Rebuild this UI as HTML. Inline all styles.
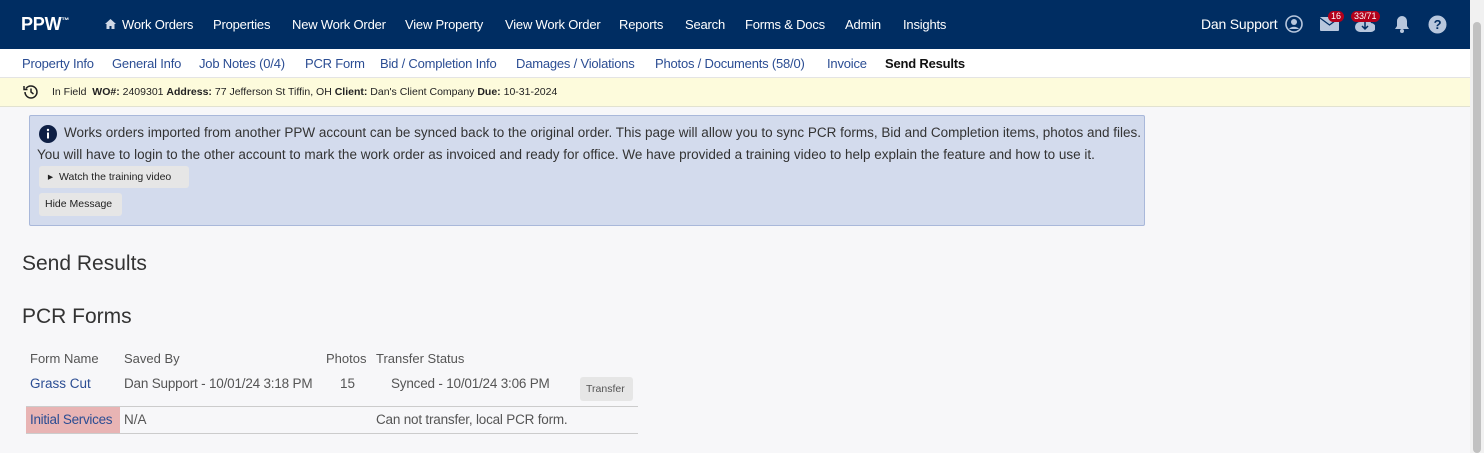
<!DOCTYPE html>
<html><head><meta charset="utf-8"><style>
*{margin:0;padding:0;box-sizing:border-box}
body{width:1484px;height:453px;overflow:hidden;background:#f7f7f9;font-family:"Liberation Sans",sans-serif;position:relative;color:#444}
.a{position:absolute;white-space:nowrap}
.nav{position:absolute;left:0;top:0;width:1470px;height:49px;background:#002d62}
.nav .a{color:#fff;font-size:13px;top:17px;letter-spacing:-0.2px}
.sub{position:absolute;left:0;top:49px;width:1470px;height:29px;background:#fff;border-bottom:1px solid #e4e4e4}
.sub .a{color:#2b4d93;font-size:13px;top:7px;letter-spacing:-0.2px}
.yb{position:absolute;left:0;top:78px;width:1470px;height:29px;background:#fdfbdc;border-bottom:1px solid #e2e2d0}
.yb .a{font-size:10.5px;top:8px;color:#222}
.info{position:absolute;left:29px;top:115px;width:1116px;height:111px;background:#d3dbed;border:1px solid #a9b8da;border-radius:2px}
.info .t{font-size:13.5px;color:#333;letter-spacing:0}
.btn{position:absolute;background:#e6e6e6;border-radius:3px;font-size:10.5px;color:#222;padding:0 6px}
.badge{position:absolute;background:#b3001b;color:#fff;font-size:9px;border-radius:7px;padding:0 3px;line-height:11px}
</style></head><body>
<div class="nav">
<div class="a" style="left:21px;top:14px;font-size:18px;font-weight:bold">PPW<sup style="font-size:8px">™</sup></div>
<svg class="a" style="left:105px;top:19px" width="11" height="10" viewBox="0 0 11 10"><path d="M5.5 0L0 5h1.5v5h3V7h2v3h3V5H11z" fill="#cfd8e6"/></svg>
<div class="a" style="left:122px">Work Orders</div>
<div class="a" style="left:213px">Properties</div>
<div class="a" style="left:292px">New Work Order</div>
<div class="a" style="left:405px">View Property</div>
<div class="a" style="left:505px">View Work Order</div>
<div class="a" style="left:619px">Reports</div>
<div class="a" style="left:685px">Search</div>
<div class="a" style="left:745px">Forms &amp; Docs</div>
<div class="a" style="left:845px">Admin</div>
<div class="a" style="left:903px">Insights</div>
<div class="a" style="left:1201px;font-size:14px;top:16px">Dan Support</div>
<svg class="a" style="left:1285px;top:15px" width="18" height="18" viewBox="0 0 18 18"><circle cx="9" cy="9" r="8" fill="none" stroke="#b8c7dd" stroke-width="1.6"/><circle cx="9" cy="7" r="3" fill="#b8c7dd"/><path d="M4 14c2-3 8-3 10 0" fill="#b8c7dd"/></svg>
<svg class="a" style="left:1320px;top:17px" width="19" height="14" viewBox="0 0 19 14"><rect width="19" height="14" rx="1" fill="#b8c7dd"/><path d="M0 1l9.5 7L19 1" stroke="#002d62" stroke-width="1.3" fill="none"/></svg>
<div class="badge" style="left:1328px;top:11px">16</div>
<svg class="a" style="left:1355px;top:17px" width="20" height="15" viewBox="0 0 20 15"><path d="M5 15a5 5 0 010-10 6 6 0 0111 1 4.5 4.5 0 010 9z" fill="#b8c7dd"/><path d="M10 5v7M7 9l3 3 3-3" stroke="#002d62" stroke-width="1.5" fill="none"/></svg>
<div class="badge" style="left:1351px;top:11px">33/71</div>
<svg class="a" style="left:1394px;top:15px" width="16" height="18" viewBox="0 0 16 18"><path d="M8 1a5 5 0 00-5 5v5l-2 3h14l-2-3V6a5 5 0 00-5-5z" fill="#b8c7dd"/><circle cx="8" cy="16" r="2" fill="#b8c7dd"/></svg>
<svg class="a" style="left:1428px;top:15px" width="19" height="19" viewBox="0 0 19 19"><circle cx="9.5" cy="9.5" r="9" fill="#b8c7dd"/><text x="9.5" y="14" font-size="13" font-weight="bold" text-anchor="middle" fill="#002d62" font-family="Liberation Sans">?</text></svg>
</div>
<div style="position:absolute;left:1470px;top:0;width:14px;height:453px;background:#f1f1f1"></div>
<div style="position:absolute;left:1473px;top:22px;width:8px;height:431px;background:#c1c1c1;border-radius:4px"></div>
<div class="sub">
<div class="a" style="left:22px">Property Info</div>
<div class="a" style="left:112px">General Info</div>
<div class="a" style="left:199px">Job Notes (0/4)</div>
<div class="a" style="left:305px">PCR Form</div>
<div class="a" style="left:380px">Bid / Completion Info</div>
<div class="a" style="left:516px">Damages / Violations</div>
<div class="a" style="left:655px">Photos / Documents (58/0)</div>
<div class="a" style="left:827px">Invoice</div>
<div class="a" style="left:885px;color:#111;font-weight:bold">Send Results</div>
</div>
<div class="yb">
<svg class="a" style="left:22px;top:6px" width="17" height="16" viewBox="0 0 17 16"><path d="M3 8a6 6 0 106-6 6 6 0 00-5 2.5" fill="none" stroke="#222" stroke-width="1.5"/><path d="M2 2v3.5h3.5" fill="none" stroke="#222" stroke-width="1.5"/><path d="M9 4.5V8l2.5 2" fill="none" stroke="#222" stroke-width="1.5"/></svg>
<div class="a" style="left:52px">In Field &nbsp;<b>WO#:</b> 2409301 <b>Address:</b> 77 Jefferson St Tiffin, OH <b>Client:</b> Dan's Client Company <b>Due:</b> 10-31-2024</div>
</div>
<div class="info">
<svg class="a" style="left:9px;top:9px" width="18" height="18" viewBox="0 0 18 18"><circle cx="9" cy="9" r="9" fill="#0e1f45"/><rect x="8" y="7.5" width="2" height="6" fill="#fff"/><circle cx="9" cy="5" r="1.2" fill="#fff"/></svg>
<div class="a t" style="left:34px;top:9px">Works orders imported from another PPW account can be synced back to the original order. This page will allow you to sync PCR forms, Bid and Completion items, photos and files.</div>
<div class="a t" style="left:7px;top:31px">You will have to login to the other account to mark the work order as invoiced and ready for office. We have provided a training video to help explain the feature and how to use it.</div>
<div class="btn" style="left:9px;top:50px;width:150px;height:22px;line-height:22px">&nbsp;▸ &nbsp;Watch the training video</div>
<div class="btn" style="left:9px;top:77px;width:83px;height:23px;line-height:23px">Hide Message</div>
</div>
<div class="a" style="left:22px;top:252px;font-size:21px;color:#333">Send Results</div>
<div class="a" style="left:22px;top:305px;font-size:21px;color:#333">PCR Forms</div>
<div class="a" style="left:30px;top:351px;font-size:13px;color:#555">Form Name</div>
<div class="a" style="left:124px;top:351px;font-size:13px;color:#555">Saved By</div>
<div class="a" style="left:326px;top:351px;font-size:13px;color:#555">Photos</div>
<div class="a" style="left:376px;top:351px;font-size:13px;color:#555">Transfer Status</div>
<div class="a" style="left:30px;top:376px;font-size:13.5px;color:#2b4d93">Grass Cut</div>
<div class="a" style="left:124px;top:376px;font-size:13.5px;color:#555;letter-spacing:-0.2px">Dan Support - 10/01/24 3:18 PM</div>
<div class="a" style="left:340px;top:376px;font-size:13.5px;color:#555">15</div>
<div class="a" style="left:391px;top:376px;font-size:13.5px;color:#555;letter-spacing:-0.2px">Synced - 10/01/24 3:06 PM</div>
<div class="btn" style="left:580px;top:377px;width:53px;height:24px;line-height:24px;color:#555">Transfer</div>
<div style="position:absolute;left:26px;top:406px;width:612px;height:1px;background:#ccc"></div>
<div style="position:absolute;left:26px;top:407px;width:94px;height:26px;background:#e8b4b4"></div>
<div class="a" style="left:30px;top:412px;font-size:13.5px;color:#2b4d93;letter-spacing:-0.3px">Initial Services</div>
<div class="a" style="left:124px;top:412px;font-size:13.5px;color:#555">N/A</div>
<div class="a" style="left:376px;top:412px;font-size:13.5px;color:#555;letter-spacing:-0.2px">Can not transfer, local PCR form.</div>
<div style="position:absolute;left:26px;top:433px;width:612px;height:1px;background:#ccc"></div>
</body></html>
